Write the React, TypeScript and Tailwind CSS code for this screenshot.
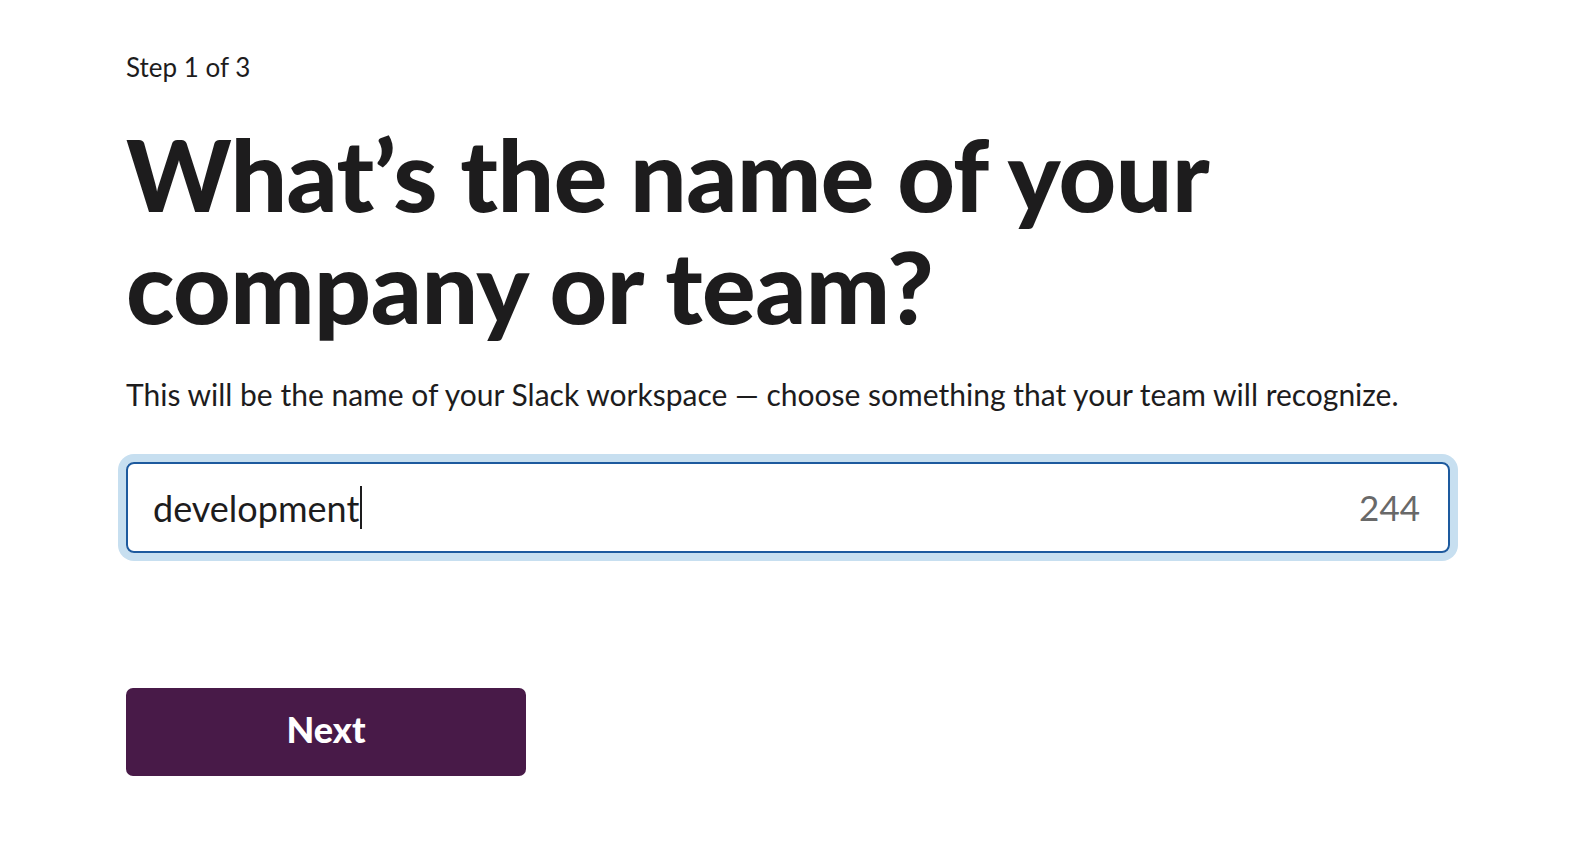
export default function App() {
  return (
    <div className="min-h-screen bg-white" style={{ fontFamily: "Lato, sans-serif" }}>
      <div className="pl-[126px] pt-[51px] pr-[144px]">
        {/* Step indicator */}
        <p className="text-[26px] leading-[32px] text-[#1d1c1d]">Step 1 of 3</p>

        {/* Title */}
        <h1 className="mt-[34px] text-[100px] leading-[112px] font-black tracking-[-0.5px] text-[#1d1c1d]">
          What’s the name of your
          <br />
          company or team?
        </h1>

        <p className="mt-[33px] text-[30px] leading-[40px] text-[#1d1c1d]">
          This will be the name of your Slack workspace — choose something that your team will recognize.
        </p>

        {/* Input */}
        <div className="mt-[48px] w-[1324px] h-[91px] rounded-[8px] border-2 border-[#1d5a9e] shadow-[0_0_0_8px_#c7dff0] flex items-center justify-between pl-[25px] pr-[28px]">
          <div className="flex items-center text-[36px] text-[#1d1c1d]">
            <span>development</span>
            <span className="ml-[1px] w-[2px] h-[43px] bg-[#1d1c1d]" />
          </div>
          <span className="text-[35px] text-[#696969]">244</span>
        </div>

        {/* Submit */}
        <button className="mt-[135px] w-[400px] h-[88px] rounded-[7px] bg-[#481a48] text-white text-[36px] font-black flex items-center justify-center pb-[6px]">
          Next
        </button>
      </div>
    </div>
  );
}
